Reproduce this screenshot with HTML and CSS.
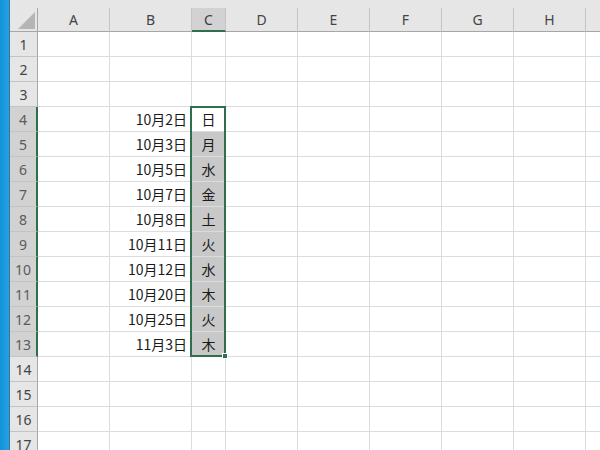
FILE: index.html
```html
<!DOCTYPE html>
<html lang="ja">
<head>
    <meta charset="UTF-8">
    <title>Sheet1</title>
    <link rel="stylesheet" href="styles.css">
</head>
<body>
    <div class="window">
        <div class="edge"></div>
        <div class="sheet">
            <div class="band"></div>
            <div class="board">
                <div class="grid" id="grid">
                    <!-- セルはJavaScriptで生成 -->
                </div>
                <!-- 選択範囲の枠 (同じグリッドを重ねる) -->
                <div class="grid overlay">
                    <div class="selection"><span class="handle"></span></div>
                </div>
            </div>
        </div>
    </div>

    <script>
        // データ (行4〜13)
        const data = {
            4: ["10月2日", "日"],
            5: ["10月3日", "月"],
            6: ["10月5日", "水"],
            7: ["10月7日", "金"],
            8: ["10月8日", "土"],
            9: ["10月11日", "火"],
            10: ["10月12日", "水"],
            11: ["10月20日", "木"],
            12: ["10月25日", "火"],
            13: ["11月3日", "木"]
        };
        const cols = ["A", "B", "C", "D", "E", "F", "G", "H", "I"];
        const grid = document.getElementById('grid');

        function cell(cls, text) {
            const div = document.createElement('div');
            div.className = cls;
            div.textContent = text || '';
            grid.appendChild(div);
            return div;
        }

        // 見出し行
        const corner = cell('corner');
        corner.innerHTML = '<span class="tri"></span>';
        cols.forEach(c => cell('colhead' + (c === 'C' ? ' active' : ''), c));

        // 行
        for (let r = 1; r <= 17; r++) {
            const selected = data[r] !== undefined;
            cell('rowhead' + (selected ? ' active' : ''), r);
            cols.forEach(c => {
                let cls = 'cell';
                let text = '';
                if (selected && c === 'B') { cls += ' num'; text = data[r][0]; }
                if (selected && c === 'C') { cls += ' mid'; text = data[r][1]; if (r > 4) cls += ' sel'; }
                cell(cls, text);
            });
        }
    </script>
</body>
</html>
```

FILE: styles.css
```css
* {
    margin: 0;
    padding: 0;
    box-sizing: border-box;
}

body {
    font-family: "Noto Sans CJK JP", "Noto Sans", sans-serif;
    background: #fff;
    color: #222;
    overflow: hidden;
}

.window {
    display: flex;
    height: 450px;
    overflow: hidden;
}

/* 左端の青いバー */
.edge {
    width: 10px;
    flex-shrink: 0;
    background: linear-gradient(to right, #1590d6, #1ea4e8);
    border-right: 1px solid #4a6e86;
}

.sheet {
    flex: 1;
    overflow: hidden;
}

.band {
    height: 8px;
    background: #e6e6e6;
}

.board {
    display: grid;
}

.grid {
    grid-area: 1 / 1;
    display: grid;
    grid-template-columns: 28px 72px 82px 34px 72px 72px 72px 72px 72px 72px;
    grid-template-rows: 24px;
    grid-auto-rows: 25px;
}

.overlay {
    pointer-events: none;
}

/* 見出し */
.corner {
    background: #e6e6e6;
    border-right: 1px solid #a6a6a6;
    border-bottom: 1px solid #a6a6a6;
    display: flex;
    justify-content: flex-end;
    align-items: flex-end;
    padding: 0 2px 2px 0;
}

.corner .tri {
    width: 17px;
    height: 17px;
    background: #b5b5b5;
    clip-path: polygon(100% 0, 100% 100%, 0 100%);
}

.colhead {
    background: #e6e6e6;
    border-right: 1px solid #c4c4c4;
    border-bottom: 1px solid #a6a6a6;
    font-family: "Noto Sans", sans-serif;
    font-size: 14px;
    color: #444;
    display: flex;
    align-items: center;
    justify-content: center;
}

.colhead.active {
    background: #d2d2d2;
    border-bottom: 2px solid #2f6f4e;
    color: #3d3d3d;
}

.rowhead {
    background: #e6e6e6;
    border-right: 1px solid #a6a6a6;
    border-bottom: 1px solid #c4c4c4;
    font-family: "Noto Sans", sans-serif;
    font-size: 14px;
    color: #444;
    display: flex;
    align-items: center;
    justify-content: center;
}

.rowhead.active {
    background: #d2d2d2;
    color: #5a5a5a;
    border-right: 2px solid #2f6f4e;
}

/* セル */
.cell {
    border-right: 1px solid #dadcdd;
    border-bottom: 1px solid #dadcdd;
    font-size: 14px;
    color: #1a1a1a;
    display: flex;
    align-items: center;
    white-space: nowrap;
}

.cell.num {
    justify-content: flex-end;
    padding-right: 4px;
}

.cell.mid {
    justify-content: center;
}

.cell.sel {
    background: #c8c8c8;
}

.selection {
    grid-column: 4;
    grid-row: 5 / 15;
    margin: -1px 0 0 -2px;
    border: 2px solid #2f6f4e;
    position: relative;
}

.selection .handle {
    position: absolute;
    right: -4px;
    bottom: -4px;
    width: 6px;
    height: 6px;
    background: #2f6f4e;
    border: 1px solid #fff;
}
```
